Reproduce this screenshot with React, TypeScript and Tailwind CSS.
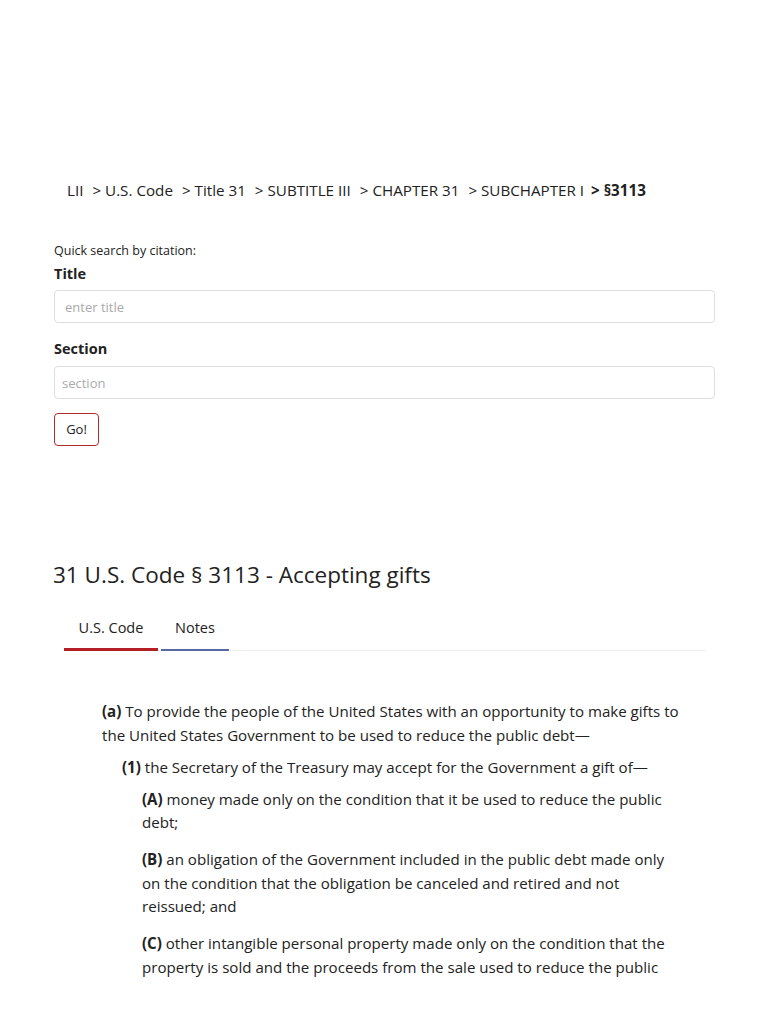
import React from "react";

export default function App() {
  const crumbs = ["U.S. Code", "Title 31", "SUBTITLE III", "CHAPTER 31", "SUBCHAPTER I"];
  return (
    <div className="min-h-[1024px] bg-white text-[#222] font-['Open_Sans',sans-serif]">
      <div className="pt-[178px] pl-[67px] text-[15.2px] leading-[24px] text-[#222]">
        <span>LII</span>
        {crumbs.map((c) => (
          <span key={c} className="ml-[9px]">&gt; {c}</span>
        ))}
        <span className="ml-[7px] font-bold">&gt; §3113</span>
      </div>

      <div className="mt-[40px] pl-[54px]">
        <div className="text-[12.5px] leading-[18px]">Quick search by citation:</div>
        <div className="mt-[4px] text-[14.5px] font-bold leading-[20px]">Title</div>
        <input
          placeholder="enter title"
          className="mt-[6px] block w-[661px] h-[33px] rounded-[4px] border border-[#dedede] px-[10px] text-[13px] placeholder:text-[#aaa] outline-none"
        />
        <div className="mt-[16px] text-[14.5px] font-bold leading-[20px]">Section</div>
        <input
          placeholder="section"
          className="mt-[7px] block w-[661px] h-[33px] rounded-[4px] border border-[#dedede] px-[7px] text-[13px] placeholder:text-[#aaa] outline-none"
        />
        <button className="mt-[14px] block h-[33px] w-[45px] rounded-[4px] border border-[#b52a2a] bg-white text-[13px]">
          Go!
        </button>
      </div>

      <h1 className="mt-[114px] ml-[53px] text-[22.5px] leading-[30px] font-normal text-[#222]">
        31 U.S. Code § 3113 - Accepting gifts
      </h1>

      <div className="mt-[26px] ml-[64px] w-[642px] flex items-end border-b border-[#eee]">
        <div className="w-[94px] border-b-[3px] border-[#b21f24] pb-[8px] text-center text-[14.5px] leading-[24px] mb-[-1px]">
          U.S. Code
        </div>
        <div className="ml-[3px] w-[68px] border-b-[2px] border-[#5867a8] pb-[9px] text-center text-[14.5px] leading-[24px] mb-[-1px]">
          Notes
        </div>
      </div>

      <div className="mt-[49px] pl-[102px] w-[700px] text-[15.1px] leading-[23.5px] text-[#222]">
        <p>
          <b>(a)</b> To provide the people of the United States with an opportunity to make gifts to<br />
          the United States Government to be used to reduce the public debt—
        </p>
        <p className="mt-[8.5px] pl-[20px]">
          <b>(1)</b> the Secretary of the Treasury may accept for the Government a gift of—
        </p>
        <p className="mt-[8.5px] pl-[40px]">
          <b>(A)</b> money made only on the condition that it be used to reduce the public<br />
          debt;
        </p>
        <p className="mt-[13.5px] pl-[40px]">
          <b>(B)</b> an obligation of the Government included in the public debt made only<br />
          on the condition that the obligation be canceled and retired and not<br />
          reissued; and
        </p>
        <p className="mt-[13.5px] pl-[40px]">
          <b>(C)</b> other intangible personal property made only on the condition that the<br />
          property is sold and the proceeds from the sale used to reduce the public
        </p>
      </div>
    </div>
  );
}
